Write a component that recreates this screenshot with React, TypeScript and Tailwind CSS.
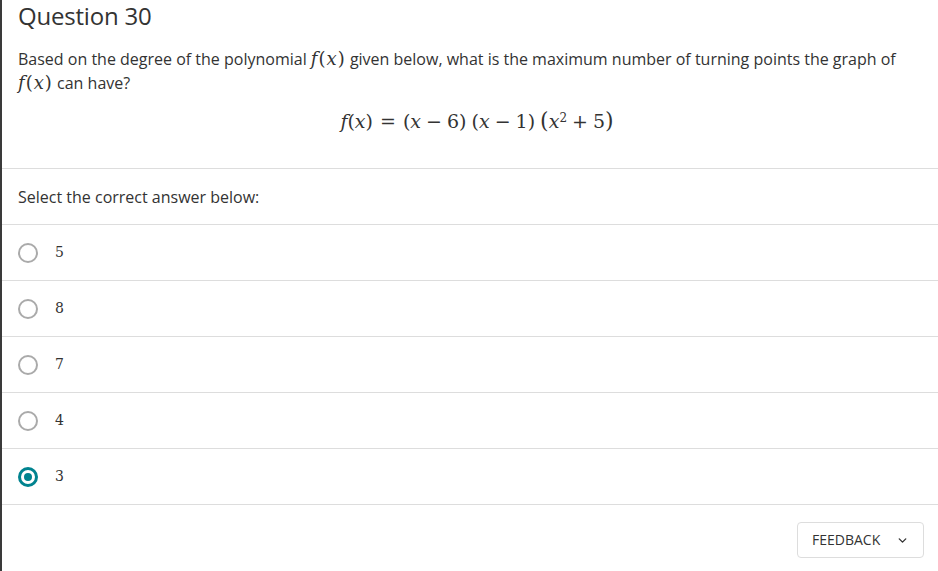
import { ChevronDown } from "lucide-react";

const options = [
  { label: "5", selected: false },
  { label: "8", selected: false },
  { label: "7", selected: false },
  { label: "4", selected: false },
  { label: "3", selected: true },
];

function Fx() {
  return (
    <span className="font-['DejaVu_Serif',serif] text-[18px] tracking-[1px]">
      <i>f</i>(<i>x</i>)
    </span>
  );
}

function Radio({ selected }: { selected: boolean }) {
  if (selected) {
    return (
      <span className="flex h-[20px] w-[20px] items-center justify-center rounded-full border-[3px] border-[#00838f]">
        <span className="h-[8px] w-[8px] rounded-full bg-[#00838f]" />
      </span>
    );
  }
  return <span className="h-[20px] w-[20px] rounded-full border-2 border-[#aaaaaa]" />;
}

export default function App() {
  return (
    <div className="h-[571px] w-full overflow-hidden border-l-2 border-[#3a3a3a] bg-white font-['Open_Sans',sans-serif] text-[#333333]">
      {/* Question Header */}
      <div className="h-[169px] border-b border-[#dddddd] px-4">
        <h1 className="text-2xl leading-8 tracking-[-0.2px]">Question 30</h1>
        <p className="mt-[15px] pr-6 text-base leading-[23px]">
          Based on the degree of the polynomial <Fx /> given below, what is the maximum number of turning points the graph of{" "}
          <Fx /> can have?
        </p>
        <div className="mt-[12px] flex justify-center pl-[14px] font-['DejaVu_Serif',serif] text-[19px] leading-7">
          <span>
            <i>f</i>(<i>x</i>)<span className="px-[7px]">=</span>(<i>x</i>
            <span className="px-[5px]">−</span>6)<span className="pl-[5px]" />(<i>x</i>
            <span className="px-[5px]">−</span>1)<span className="pl-[5px]" />
            <span className="text-[22px]">(</span>
            <i>x</i>
            <sup className="text-[12px]">2</sup>
            <span className="px-[5px]">+</span>5<span className="text-[22px]">)</span>
          </span>
        </div>
      </div>

      {/* Prompt */}
      <div className="flex h-[56px] items-center border-b border-[#dddddd] px-4 text-base">
        Select the correct answer below:
      </div>

      {/* Options */}
      {options.map((option) => (
        <div key={option.label} className="flex h-[56px] items-center border-b border-[#dddddd] pl-4">
          <Radio selected={option.selected} />
          <span className="ml-[17px] font-['DejaVu_Serif',serif] text-[14px]">{option.label}</span>
        </div>
      ))}

      {/* Footer */}
      <div className="flex justify-end pr-[14px] pt-[17px]">
        <button className="flex h-[36px] w-[127px] items-center rounded-sm border border-[#dddddd] bg-white pl-[14px] text-sm text-[#333333]">
          FEEDBACK
          <ChevronDown className="ml-auto mr-[14px] h-[13px] w-[13px]" strokeWidth={2.5} />
        </button>
      </div>
    </div>
  );
}
